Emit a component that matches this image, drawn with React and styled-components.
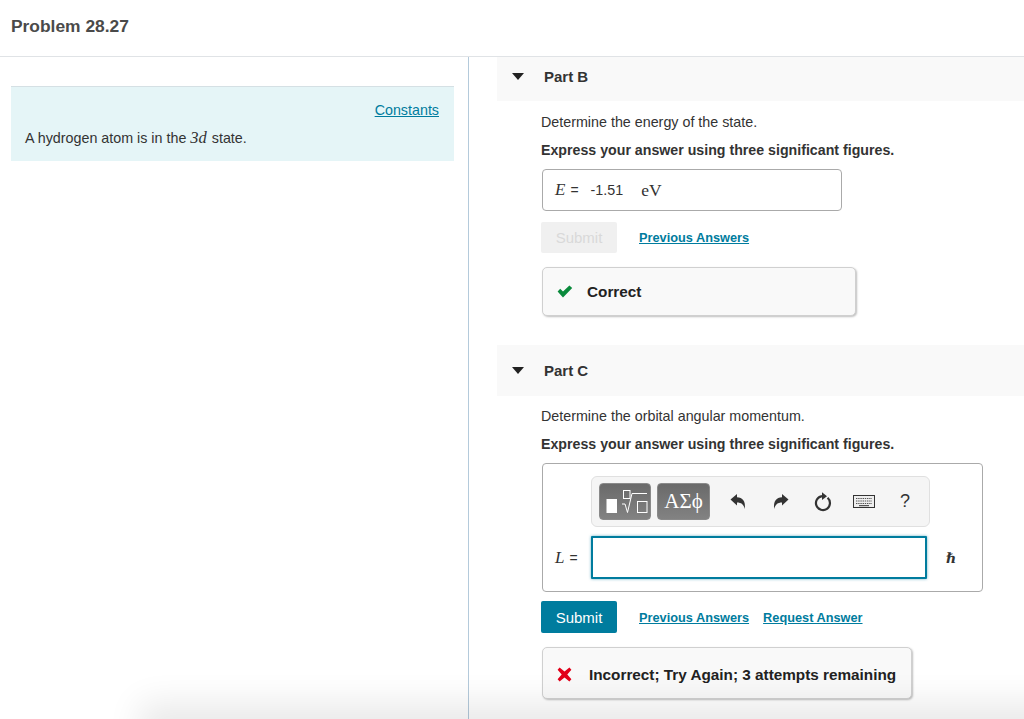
import React from "react";
import styled, { createGlobalStyle } from "styled-components";

const GlobalStyle = createGlobalStyle`
  html, body {
    margin: 0;
    padding: 0;
    background: #fff;
    overflow: hidden;
  }
  body {
    font-family: "Liberation Sans", Arial, sans-serif;
    font-size: 14.3px;
    color: #333;
  }
`;

const Page = styled.div`
  position: relative;
  width: 1024px;
  height: 719px;
  overflow: hidden;
`;

const Header = styled.header`
  display: flex;
  align-items: center;
  height: 53px;
  padding: 0 0 3px 11px;
  border-bottom: 1px solid #e0e3e6;
`;

const Title = styled.h1`
  margin: 0;
  font-size: 17.4px;
  font-weight: 700;
  color: #4a4a4a;
`;

const Columns = styled.div`
  display: flex;
  height: 662px;
`;

const LeftColumn = styled.aside`
  width: 468px;
  border-right: 1px solid #b4cadb;
  padding-top: 29px;
`;

const InfoPanel = styled.section`
  width: 443px;
  height: 75px;
  margin-left: 11px;
  box-sizing: border-box;
  background: #e5f5f7;
  border-top: 1px solid #d5e0e4;
  padding: 14px 15px 0 14px;
`;

const ConstantsRow = styled.div`
  display: flex;
  justify-content: flex-end;
  line-height: 18px;
`;

const TextLink = styled.a`
  color: #007c9e;
  text-decoration: underline;
`;

const InfoText = styled.p`
  margin: 10px 0 0;
  line-height: 18px;
  color: #333;
`;

const MathVar = styled.i`
  font-family: "Liberation Serif", "Times New Roman", serif;
  font-size: 16.5px;
  margin-right: 1px;
`;

const RightColumn = styled.main`
  flex: 1;
  padding-left: 28px;
`;

const PartHeader = styled.div`
  display: flex;
  align-items: center;
  box-sizing: border-box;
  height: ${(p) => p.$height}px;
  margin-top: ${(p) => p.$top || 0}px;
  padding: 0 0 ${(p) => p.$lift || 0}px 15px;
  background: #f9f9f9;
`;

const Caret = styled.span`
  width: 0;
  height: 0;
  border-left: 6px solid transparent;
  border-right: 6px solid transparent;
  border-top: 7px solid #222;
  margin-right: 20px;
`;

const PartTitle = styled.h2`
  margin: 0;
  font-size: 15px;
  font-weight: 700;
  color: #333;
`;

const PartBody = styled.div`
  padding-left: 44px;
`;

const Prompt = styled.p`
  margin: ${(p) => p.$top}px 0 0;
  line-height: 18px;
  color: #333;
`;

const Hint = styled.p`
  margin: 10px 0 0;
  line-height: 18px;
  font-weight: 700;
  font-size: 14.2px;
  color: #333;
`;

const AnswerBox = styled.div`
  box-sizing: border-box;
  width: 300px;
  height: 42px;
  margin: 10px 0 0 1px;
  display: flex;
  align-items: center;
  padding-left: 12px;
  border: 1px solid #aaa;
  border-radius: 4px;
  background: #fff;
`;

const MathLabel = styled.span`
  font-family: "Liberation Serif", "Times New Roman", serif;
  font-size: 17px;
  font-style: italic;
  color: #333;
`;

const Equals = styled.span`
  font-size: 14px;
  margin-left: 5px;
`;

const AnswerValue = styled.span`
  margin-left: 12px;
`;

const Unit = styled.span`
  margin-left: 18px;
  font-family: "Liberation Serif", "Times New Roman", serif;
  font-size: 17.5px;
`;

const ActionRow = styled.div`
  display: flex;
  align-items: center;
  margin-top: ${(p) => p.$top}px;
`;

const SubmitButton = styled.button`
  width: 76px;
  height: ${(p) => p.$height}px;
  border: 0;
  border-radius: 2px;
  padding: 0;
  font-family: inherit;
  font-size: 15px;
  background: ${(p) => (p.disabled ? "#f0f0f0" : "#007c9e")};
  color: ${(p) => (p.disabled ? "#d9d9d9" : "#fff")};
`;

const ActionLink = styled.a`
  color: #007c9e;
  font-size: 12.75px;
  font-weight: 700;
  text-decoration: underline;
  margin-left: ${(p) => p.$left}px;
`;

const Feedback = styled.div`
  box-sizing: border-box;
  width: ${(p) => p.$width}px;
  height: ${(p) => p.$height}px;
  margin: 14px 0 0 1px;
  display: flex;
  align-items: center;
  padding: ${(p) => p.$drop || 0}px 0 0 14px;
  background: #f9f9f9;
  border: 1px solid #d0d0d0;
  border-radius: 5px;
  box-shadow: 1px 1px 2px rgba(0, 0, 0, 0.25);
`;

const FeedbackText = styled.span`
  margin-left: ${(p) => p.$left}px;
  font-size: 15.3px;
  font-weight: 700;
  color: #222;
`;

const EditorBox = styled.div`
  box-sizing: border-box;
  width: 441px;
  height: 129px;
  margin: 10px 0 0 1px;
  padding: 12px 0 0 12px;
  border: 1px solid #aaa;
  border-radius: 4px;
  background: #fff;
`;

const Toolbar = styled.div`
  box-sizing: border-box;
  width: 339px;
  height: 51px;
  margin-left: 36px;
  display: flex;
  align-items: center;
  padding-left: 7px;
  background: #f5f5f5;
  border: 1px solid #e0e0e0;
  border-radius: 6px;
`;

const PaletteButton = styled.div`
  box-sizing: border-box;
  width: ${(p) => p.$width}px;
  height: 37px;
  margin-right: 6px;
  display: flex;
  align-items: center;
  justify-content: center;
  border: 1px solid #8a8a8a;
  border-radius: 4px;
  background: linear-gradient(#6a6a6a, #828282);
  color: #fff;
  font-family: "Liberation Serif", "Times New Roman", serif;
  font-size: 21px;
`;

const ToolIcons = styled.div`
  display: flex;
  align-items: center;
  margin-left: 7px;
`;

const ToolSlot = styled.span`
  width: ${(p) => p.$width || 44}px;
  display: flex;
  justify-content: center;
  color: #333;
  font-size: 18px;
`;

const InputRow = styled.div`
  display: flex;
  align-items: center;
  margin-top: 9px;
`;

const RowLabel = styled.span`
  width: 36px;
  display: flex;
  align-items: baseline;
`;

const MathInput = styled.input`
  box-sizing: border-box;
  width: 336px;
  height: 43px;
  border: 2px solid #007c9e;
  border-radius: 1px;
  box-shadow: 0 0 3px rgba(0, 124, 158, 0.6);
  outline: none;
`;

const PlanckUnit = styled.span`
  margin-left: 19px;
  font-family: "DejaVu Serif", "Liberation Serif", serif;
  font-size: 14px;
  font-weight: 700;
  color: #333;
`;

const BottomFade = styled.div`
  position: absolute;
  left: 150px;
  right: -40px;
  bottom: -30px;
  height: 30px;
  box-shadow: 0 -6px 34px 10px rgba(0, 0, 0, 0.09);
  pointer-events: none;
`;

const CheckIcon = () => (
  <svg width="16" height="13" viewBox="0 0 16 13">
    <path d="M0.6 6.4 L3.2 3.8 L6 6.6 L12.4 0.4 L15.2 3 L6 12.4 Z" fill="#0a8a3c" />
  </svg>
);

const CrossIcon = () => (
  <svg width="15" height="15" viewBox="0 0 15 15">
    <path d="M2.6 0.6 L7.5 4.6 L12.4 0.6 L14.4 2.8 L10.3 7.5 L14.4 12.2 L12.4 14.4 L7.5 10.4 L2.6 14.4 L0.6 12.2 L4.7 7.5 L0.6 2.8 Z" fill="#e2001a" />
  </svg>
);

const FractionRootIcon = () => (
  <svg width="46" height="28" viewBox="0 0 46 28" fill="none">
    <rect x="4.5" y="11" width="10.5" height="14" fill="#fff" />
    <rect x="21.5" y="2.5" width="6.5" height="8" stroke="#fff" />
    <path d="M20 16 L23 16 L25.5 24.5 L30 5.5 L45 5.5" stroke="#fff" />
    <rect x="35.5" y="13.5" width="9.5" height="11" stroke="#fff" />
  </svg>
);

const UndoIcon = () => (
  <svg width="16" height="17" viewBox="0 0 16 17">
    <path d="M0.5 6.5 L7 1 V4.2 C12.5 4.4 15.8 8 14.8 16 C13.6 11.6 11.4 9.6 7 9.6 V12.4 Z" fill="#333" />
  </svg>
);

const RedoIcon = () => (
  <svg width="16" height="17" viewBox="0 0 16 17">
    <path d="M15.5 6.5 L9 1 V4.2 C3.5 4.4 0.2 8 1.2 16 C2.4 11.6 4.6 9.6 9 9.6 V12.4 Z" fill="#333" />
  </svg>
);

const ResetIcon = () => (
  <svg width="18" height="20" viewBox="0 0 18 20" fill="none">
    <path d="M13.6 5.8 A7 7 0 1 1 8 4.1" stroke="#333" strokeWidth="2.2" />
    <path d="M8 0.3 L13 4.2 L8 7.9 Z" fill="#333" />
  </svg>
);

const KeyboardIcon = () => (
  <svg width="22" height="13" viewBox="0 0 22 13" fill="none">
    <rect x="0.5" y="0.5" width="21" height="12" fill="#eee" stroke="#333" />
    <path d="M3 3.5 H19 M3 6 H19 M3 8.5 H19" stroke="#555" strokeDasharray="1.4 0.8" />
    <path d="M6 10.7 H16" stroke="#333" />
  </svg>
);

export default function App() {
  return (
    <Page>
      <GlobalStyle />
      <Header>
        <Title>Problem 28.27</Title>
      </Header>
      <Columns>
        <LeftColumn>
          <InfoPanel>
            <ConstantsRow>
              <TextLink href="#">Constants</TextLink>
            </ConstantsRow>
            <InfoText>
              A hydrogen atom is in the <MathVar>3d</MathVar> state.
            </InfoText>
          </InfoPanel>
        </LeftColumn>
        <RightColumn>
          <PartHeader $height={44} $lift={5}>
            <Caret />
            <PartTitle>Part B</PartTitle>
          </PartHeader>
          <PartBody>
            <Prompt $top={12}>Determine the energy of the state.</Prompt>
            <Hint>Express your answer using three significant figures.</Hint>
            <AnswerBox>
              <MathLabel>E</MathLabel>
              <Equals>=</Equals>
              <AnswerValue>-1.51</AnswerValue>
              <Unit>eV</Unit>
            </AnswerBox>
            <ActionRow $top={11}>
              <SubmitButton disabled $height={31}>Submit</SubmitButton>
              <ActionLink href="#" $left={22}>Previous Answers</ActionLink>
            </ActionRow>
            <Feedback $width={314} $height={49}>
              <CheckIcon />
              <FeedbackText $left={14}>Correct</FeedbackText>
            </Feedback>
          </PartBody>
          <PartHeader $height={51} $top={29}>
            <Caret />
            <PartTitle>Part C</PartTitle>
          </PartHeader>
          <PartBody>
            <Prompt $top={11}>Determine the orbital angular momentum.</Prompt>
            <Hint>Express your answer using three significant figures.</Hint>
            <EditorBox>
              <Toolbar>
                <PaletteButton $width={52}><FractionRootIcon /></PaletteButton>
                <PaletteButton $width={53}>ΑΣϕ</PaletteButton>
                <ToolIcons>
                  <ToolSlot $width={30}><UndoIcon /></ToolSlot>
                  <ToolSlot $width={55}><RedoIcon /></ToolSlot>
                  <ToolSlot $width={30}><ResetIcon /></ToolSlot>
                  <ToolSlot $width={52}><KeyboardIcon /></ToolSlot>
                  <ToolSlot $width={30}>?</ToolSlot>
                </ToolIcons>
              </Toolbar>
              <InputRow>
                <RowLabel>
                  <MathLabel>L</MathLabel>
                  <Equals>=</Equals>
                </RowLabel>
                <MathInput />
                <PlanckUnit>ℏ</PlanckUnit>
              </InputRow>
            </EditorBox>
            <ActionRow $top={9}>
              <SubmitButton $height={32}>Submit</SubmitButton>
              <ActionLink href="#" $left={22}>Previous Answers</ActionLink>
              <ActionLink href="#" $left={14}>Request Answer</ActionLink>
            </ActionRow>
            <Feedback $width={370} $height={52} $drop={3}>
              <CrossIcon />
              <FeedbackText $left={17}>Incorrect; Try Again; 3 attempts remaining</FeedbackText>
            </Feedback>
          </PartBody>
        </RightColumn>
      </Columns>
      <BottomFade />
    </Page>
  );
}
